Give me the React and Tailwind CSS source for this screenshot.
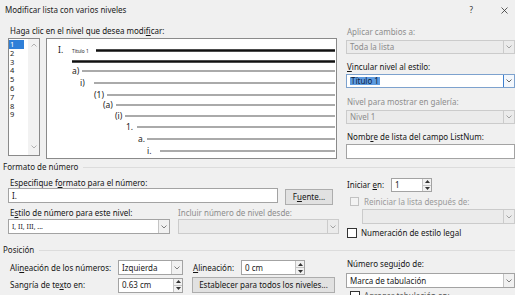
import React from "react";

const Chev = ({ up = false, className = "" }) => (
  <svg width="6" height="4" viewBox="0 0 6 4" className={className}>
    <polyline
      points={up ? "0.5,3.5 3,1 5.5,3.5" : "0.5,0.5 3,3 5.5,0.5"}
      fill="none"
      stroke="currentColor"
      strokeWidth="0.9"
    />
  </svg>
);

function Combo({ value, disabled = false, focus = false, className = "", selected = false, small = false }) {
  const box = disabled
    ? "bg-[#ebebeb] border-[#cbcbcb] text-[#8c8c8c]"
    : focus
    ? "bg-white border-[#7da2ce] text-[#111]"
    : "bg-white border-[#a3a3a3] text-[#1a1a1a]";
  const btn = disabled
    ? "border-[#cbcbcb] bg-[#ebebeb] text-[#9a9a9a]"
    : focus
    ? "border-[#3c7fd0] bg-[#f3f7fc] text-[#555]"
    : "border-[#c4c4c4] bg-[#f1f1f1] text-[#707070]";
  return (
    <div className={`flex border ${box} ${className}`}>
      <div className={`flex-1 flex items-center pl-[3px] overflow-hidden whitespace-nowrap ${small ? "text-[7px]" : ""}`}>
        {selected ? <span className="bg-[#5d9be0] text-[#0c1e3d] px-[1px]">{value}</span> : value}
      </div>
      <div className={`w-[11px] border-l flex items-center justify-center ${btn}`}>
        <Chev />
      </div>
    </div>
  );
}

function Spin({ value, className = "" }) {
  return (
    <div className={`flex border border-[#a3a3a3] bg-white ${className}`}>
      <div className="flex-1 flex items-center pl-[3px] text-[#1a1a1a]">{value}</div>
      <div className="w-[9px] flex flex-col border-l border-[#c4c4c4] bg-[#f1f1f1]">
        <div className="flex-1 flex items-center justify-center border-b border-[#c4c4c4]">
          <svg width="5" height="3" viewBox="0 0 5 3"><polygon points="0,3 2.5,0 5,3" fill="#333" /></svg>
        </div>
        <div className="flex-1 flex items-center justify-center">
          <svg width="5" height="3" viewBox="0 0 5 3"><polygon points="0,0 2.5,3 5,0" fill="#333" /></svg>
        </div>
      </div>
    </div>
  );
}

function Check({ disabled = false, className = "" }) {
  return (
    <div
      className={`w-[9px] h-[9px] border ${
        disabled ? "border-[#c2c2c2] bg-[#f3f3f3]" : "border-[#333] bg-white"
      } ${className}`}
    />
  );
}

function Header({ children, className = "" }) {
  return (
    <div className={`-ml-[5px] flex items-center h-[8px] gap-[5px] ${className}`}>
      <span className="leading-[8px] text-[#1a1a1a]">{children}</span>
      <div className="flex-1 h-px bg-[#dcdcdc]" />
    </div>
  );
}

function Preview() {
  const levels = [
    { t: "a)", tx: 25, y: 32, lx: 35 },
    { t: "i)", tx: 33, y: 44, lx: 47 },
    { t: "(1)", tx: 47, y: 56, lx: 60 },
    { t: "(a)", tx: 56, y: 66, lx: 69 },
    { t: "(i)", tx: 68, y: 77, lx: 78 },
    { t: "1.", tx: 79, y: 88, lx: 90 },
    { t: "a.", tx: 91, y: 100, lx: 100 },
    { t: "i.", tx: 100, y: 112, lx: 113 },
  ];
  return (
    <svg width="289" height="119" viewBox="0 0 289 119" className="block">
      <text x="11" y="14" fontSize="8.5" fill="#222" fontFamily="Noto Sans, sans-serif">I.</text>
      <text x="25" y="13.5" fontSize="4.8" fill="#222" fontFamily="Noto Sans, sans-serif">Título 1</text>
      <line x1="49" y1="11.5" x2="288" y2="11.5" stroke="#111" strokeWidth="2.4" />
      <line x1="25" y1="22.5" x2="288" y2="22.5" stroke="#111" strokeWidth="2.4" />
      {levels.map((l) => (
        <g key={l.t + l.y}>
          <text x={l.tx} y={l.y + 3} fontSize="8.5" fill="#222" fontFamily="Noto Sans, sans-serif">
            {l.t}
          </text>
          <line x1={l.lx} y1={l.y} x2="288" y2={l.y} stroke="#8e8e8e" strokeWidth="1.6" />
        </g>
      ))}
    </svg>
  );
}

function Listbox() {
  const items = [1, 2, 3, 4, 5, 6, 7, 8, 9];
  return (
    <div className="w-[32px] h-[118px] border border-[#8a8a8a] bg-white flex">
      <div className="flex-1 pt-[1px] text-[7.5px]">
        {items.map((n) => (
          <div
            key={n}
            className={`w-[15px] h-[8.8px] leading-[8.8px] pl-[1px] ${
              n === 1 ? "bg-[#2f7fd8] text-white" : "text-[#1a1a1a]"
            }`}
          >
            {n}
          </div>
        ))}
      </div>
      <div className="w-[11px] bg-[#f2f2f2] flex flex-col items-center justify-between pt-[4px] pb-[6px] text-[#a9a9a9]">
        <Chev up />
        <Chev />
      </div>
    </div>
  );
}

export default function App() {
  return (
    <div className="w-[515px] h-[295px] overflow-hidden bg-[#f0f0f0] font-['Noto_Sans',sans-serif] text-[8px] leading-none text-[#151515]">
      {/* Title bar */}
      <div className="h-[20px] flex items-center pl-[5px]">
        <span className="text-[8px] text-[#222]">Modificar lista con varios niveles</span>
        <span className="ml-auto mr-[28px] text-[8px] text-[#333]">?</span>
        <svg width="7" height="7" viewBox="0 0 7 7" className="mr-[7px]">
          <path d="M0.5 0.5 L6.5 6.5 M6.5 0.5 L0.5 6.5" stroke="#333" strokeWidth="0.8" />
        </svg>
      </div>

      <div className="pl-[8px]">
        {/* Top section */}
        <div className="flex">
          <div className="w-[329px]">
            <div className="mt-[7px] h-[8px] leading-[8px] pl-[2px]">
              Haga clic en el nivel que desea modi<u>f</u>icar:
            </div>
            <div className="mt-[3px] flex items-start">
              <Listbox />
              <div className="ml-[6px] w-[291px] h-[121px] border border-[#8a8a8a] bg-white">
                <Preview />
              </div>
            </div>
          </div>
          <div className="ml-[9px] flex-1 flex flex-col">
            <div className="mt-[8px] h-[8px] leading-[8px] pl-[1px] text-[#8d8d8d]">Aplicar cambios a:</div>
            <Combo disabled value="Toda la lista" className="mt-[4px] h-[14px]" />
            <div className="mt-[9px] h-[8px] leading-[8px] pl-[1px]">
              <u>V</u>incular nivel al estilo:
            </div>
            <Combo focus selected value="Título 1" className="mt-[3px] h-[14px]" />
            <div className="mt-[10px] h-[8px] leading-[8px] pl-[1px] text-[#8d8d8d]">Nivel para mostrar en galería:</div>
            <Combo disabled value="Nivel 1" className="mt-[4px] h-[14px]" />
            <div className="mt-[9px] h-[8px] leading-[8px] pl-[1px]">
              Nomb<u>r</u>e de lista del campo ListNum:
            </div>
            <div className="mt-[3px] h-[15px] border border-[#a3a3a3] bg-white" />
          </div>
        </div>

        {/* Formato de número */}
        <Header className="mt-[4px]">Formato de número</Header>
        <div className="flex">
          <div className="w-[333px]">
            <div className="mt-[8px] h-[8px] leading-[8px] pl-[2px]">
              Especifique f<u>o</u>rmato para el número:
            </div>
            <div className="mt-[1px] h-[17px] flex items-start">
              <div className="w-[270px] h-[15px] border border-[#a3a3a3] bg-white flex items-center pl-[3px]">
                <span>I.</span>
              </div>
              <div className="ml-[7px] mt-[1px] w-[48px] h-[16px] border border-[#adadad] bg-[#e1e1e1] flex items-center justify-center">
                F<u>u</u>ente...
              </div>
            </div>
            <div className="mt-[4px] h-[8px] leading-[8px] flex">
              <div className="w-[170px] pl-[2px]">
                E<u>s</u>tilo de número para este nivel:
              </div>
              <div className="text-[#8d8d8d]">Incluir número de nivel desde:</div>
            </div>
            <div className="mt-[2px] flex">
              <Combo value="I, II, III, ..." small className="w-[162px] h-[15px]" />
              <Combo disabled value="" className="ml-[8px] w-[161px] h-[15px]" />
            </div>
          </div>
          <div className="ml-[5px] flex-1 flex flex-col">
            <div className="mt-[7px] h-[14px] flex items-center">
              <div className="w-[45px] pl-[1px]">
                Iniciar <u>e</u>n:
              </div>
              <Spin value="1" className="w-[41px] h-[14px]" />
            </div>
            <div className="mt-[5px] h-[9px] flex items-center">
              <Check disabled className="ml-[4px]" />
              <span className="ml-[5px] text-[#9a9a9a]">Reiniciar la lista después de:</span>
            </div>
            <Combo disabled value="" className="mt-[3px] ml-[16px] h-[15px]" />
            <div className="mt-[4px] h-[10px] flex items-center">
              <Check className="ml-[1px] w-[10px] h-[10px]" />
              <span className="ml-[4px]">
                Numeración de estilo le<u>g</u>al
              </span>
            </div>
          </div>
        </div>

        {/* Posición */}
        <Header className="mt-[8px]">Posición</Header>
        <div className="flex">
          <div className="w-[333px]">
            <div className="mt-[6px] h-[15px] flex items-center">
              <div className="w-[110px] pl-[2px] whitespace-nowrap">
                Ali<u>n</u>eación de los números:
              </div>
              <Combo value="Izquierda" className="w-[65px] h-[15px]" />
              <div className="ml-[10px] w-[48px]">
                <u>A</u>lineación:
              </div>
              <Spin value="0 cm" className="w-[64px] h-[15px]" />
            </div>
            <div className="mt-[2px] h-[16px] flex items-center">
              <div className="w-[110px] pl-[2px]">
                Sangría de te<u>x</u>to en:
              </div>
              <Spin value="0.63 cm" className="w-[65px] h-[15px]" />
              <div className="ml-[9px] w-[143px] h-[16px] border border-[#adadad] bg-[#e1e1e1] flex items-center justify-center whitespace-nowrap">
                Establecer para todos los niveles...
              </div>
            </div>
          </div>
          <div className="ml-[5px] flex-1 flex flex-col">
            <div className="mt-[6px] h-[8px] leading-[8px] pl-[1px]">
              Número segu<u>i</u>do de:
            </div>
            <Combo value="Marca de tabulación" className="mt-[5px] h-[15px]" />
            <div className="mt-[3px] h-[10px] flex items-center">
              <Check className="ml-[4px] w-[10px] h-[10px]" />
              <span className="ml-[4px] text-[#555]">Agregar tabulación en:</span>
            </div>
          </div>
        </div>
      </div>
    </div>
  );
}
